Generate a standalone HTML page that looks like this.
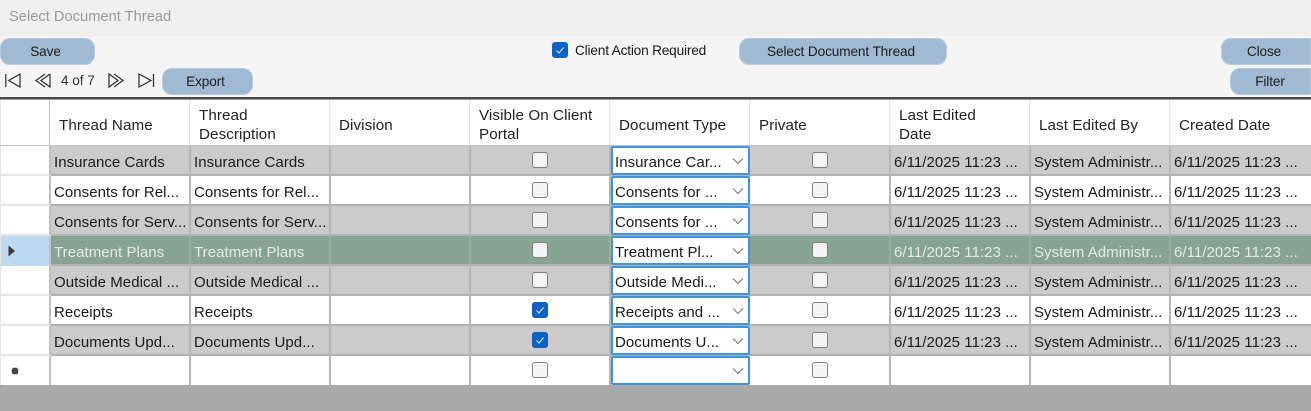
<!DOCTYPE html>
<html><head><meta charset="utf-8"><title>Select Document Thread</title>
<style>
html,body{margin:0;padding:0;width:1311px;height:411px;overflow:hidden;background:#f5f5f5;font-family:"Liberation Sans",sans-serif;font-size:14px;color:#1a1a1a}
div,span,i{box-sizing:border-box}
.a{position:absolute}
#top{left:0;top:0;width:1311px;height:36px;background:#f0f0f0}
#title{left:9px;top:8px;font-size:14.7px;color:#9a9a9a;line-height:18px;white-space:nowrap}
.b{position:absolute;background:#9fbad2;border:1px solid #b6cbdd;border-radius:10px;text-align:center;height:27px;line-height:25px;font-size:13.6px;color:#1c1c1c;letter-spacing:-.1px;padding-right:4px}
.h{position:absolute;top:100px;height:46px;background:#fff;border-right:2px solid #e0e0e0;border-bottom:1px solid #c4c4c4;font-size:15.2px;line-height:19px;color:#222;white-space:nowrap;letter-spacing:.08px}
.h span{position:absolute;left:9px;top:16px}
.h span.t{top:6px}
.r{position:absolute;left:0;width:1311px;height:30px;background:#fff;border-bottom:2px solid #b2b2b2}
.g{background:#cbcbcb}
.s{background:#87a392;color:#e6eee9}
.r>span{position:absolute;top:0;height:28px;line-height:33px;border-right:2px solid #b6b6b6;white-space:nowrap;padding-left:4px;font-size:15px;letter-spacing:.05px}
.s>span{border-right-color:#9aad9f}
.r>span.n{left:0;width:51px;height:30px;background:#fff;border-right:2px solid #c0c0c0;border-left:1px solid #e4e4e4;border-bottom:2px solid #e6e6e6}
.c1{left:50px;width:141px}.c2{left:190px;width:141px}.c3{left:330px;width:141px}.c4{left:470px;width:141px}
.c6{left:750px;width:141px}.c7{left:890px;width:141px}.c8{left:1030px;width:141px}.c9{left:1170px;width:141px;border-right:0!important}
.d{position:absolute;left:611px;top:0;width:139px;height:29px;background:#fff;border:2px solid #3f94de;border-radius:2px;line-height:30px;padding-left:2px;font-size:15px;letter-spacing:.05px;color:#1a1a1a;white-space:nowrap;z-index:2}
.d svg{position:absolute;left:119px;top:9px}
.cb{position:absolute;width:16px;height:16px;border:1.5px solid #808080;border-radius:3px;background:#f3f3f3;top:6px;z-index:2}
.on{background:#0b62c4;border-color:#0b62c4}
.on svg{position:absolute;left:2px;top:3px}
</style></head><body>
<div class="a" id="top"></div>
<div class="a" id="title">Select Document Thread</div>

<div class="b" style="left:0;top:38px;width:95px">Save</div>
<div class="cb on" style="left:552px;top:42px"><svg width="10" height="9" viewBox="0 0 10 9"><path d="M1.5 4.5 4 7 8.5 1.5" fill="none" stroke="#cfe2f7" stroke-width="1.2"/></svg></div>
<div class="a" style="left:575px;top:42px;font-size:13.7px;line-height:18px;letter-spacing:-.2px;white-space:nowrap">Client Action Required</div>
<div class="b" style="left:739px;top:38px;width:208px">Select Document Thread</div>
<div class="b" style="left:1221px;top:38px;width:90px;border-radius:10px 0 0 10px">Close</div>
<div class="b" style="left:162px;top:68px;width:91px">Export</div>
<div class="b" style="left:1230px;top:68px;width:81px;border-radius:10px 0 0 10px;padding-right:1px">Filter</div>

<svg class="a" style="left:0;top:68px" width="160" height="26" viewBox="0 0 160 26" fill="none" stroke="#333" stroke-width="1.25">
<path d="M5.8 6V19M20 6 8.8 12.5 20 19Z"/>
<path d="M45 6 36 12.5 45 19M50 6 41 12.5 50 19V6"/>
<path d="M109 6V19L118 12.5ZM114 6 123 12.5 114 19"/>
<path d="M139 6V19L151 12.5ZM153.5 6V19"/>
</svg>
<div class="a" style="left:61px;top:72px;font-size:13.6px;line-height:18px;letter-spacing:-.05px;color:#333;white-space:nowrap">4 of 7</div>

<div class="a" style="left:0;top:97px;width:1311px;height:3px;background:#4a4a4a;border-bottom:1px solid #999"></div>
<div class="a" style="left:0;top:385px;width:1311px;height:26px;background:#a9a9a9"></div>

<div class="h" style="left:0;width:51px;border-right-color:#c0c0c0;border-left:1px solid #e4e4e4"></div>
<div class="h" style="left:50px;width:141px"><span>Thread Name</span></div>
<div class="h" style="left:190px;width:141px"><span class="t">Thread<br>Description</span></div>
<div class="h" style="left:330px;width:141px"><span>Division</span></div>
<div class="h" style="left:470px;width:141px"><span class="t">Visible On Client<br>Portal</span></div>
<div class="h" style="left:610px;width:141px"><span>Document Type</span></div>
<div class="h" style="left:750px;width:141px"><span>Private</span></div>
<div class="h" style="left:890px;width:141px"><span class="t">Last Edited<br>Date</span></div>
<div class="h" style="left:1030px;width:141px"><span>Last Edited By</span></div>
<div class="h" style="left:1170px;width:141px;border-right:0"><span>Created Date</span></div>

<div class="r g" style="top:146px"><span class="n"></span><span class="c1">Insurance Cards</span><span class="c2">Insurance Cards</span><span class="c3"></span><span class="c4"></span><i class="cb" style="left:532px"></i><div class="d">Insurance Car...<svg width="12" height="8" viewBox="0 0 12 8"><path d="M1 1.5 6 6.5 11 1.5" fill="none" stroke="#777" stroke-width="1.1"/></svg></div><span class="c6"></span><i class="cb" style="left:812px"></i><span class="c7">6/11/2025 11:23 ...</span><span class="c8">System Administr...</span><span class="c9">6/11/2025 11:23 ...</span></div>

<div class="r" style="top:176px"><span class="n"></span><span class="c1">Consents for Rel...</span><span class="c2">Consents for Rel...</span><span class="c3"></span><span class="c4"></span><i class="cb" style="left:532px"></i><div class="d">Consents for ...<svg width="12" height="8" viewBox="0 0 12 8"><path d="M1 1.5 6 6.5 11 1.5" fill="none" stroke="#777" stroke-width="1.1"/></svg></div><span class="c6"></span><i class="cb" style="left:812px"></i><span class="c7">6/11/2025 11:23 ...</span><span class="c8">System Administr...</span><span class="c9">6/11/2025 11:23 ...</span></div>

<div class="r g" style="top:206px"><span class="n"></span><span class="c1">Consents for Serv...</span><span class="c2">Consents for Serv...</span><span class="c3"></span><span class="c4"></span><i class="cb" style="left:532px"></i><div class="d">Consents for ...<svg width="12" height="8" viewBox="0 0 12 8"><path d="M1 1.5 6 6.5 11 1.5" fill="none" stroke="#777" stroke-width="1.1"/></svg></div><span class="c6"></span><i class="cb" style="left:812px"></i><span class="c7">6/11/2025 11:23 ...</span><span class="c8">System Administr...</span><span class="c9">6/11/2025 11:23 ...</span></div>

<div class="r s" style="top:236px"><span class="n" style="background:#bbdaf2;border-bottom-color:#bbdaf2"><svg style="position:absolute;left:7px;top:9px" width="8" height="12" viewBox="0 0 8 12"><path d="M0.5 0.5 7 6 0.5 11.5Z" fill="#3c3c3c"/></svg></span><span class="c1">Treatment Plans</span><span class="c2">Treatment Plans</span><span class="c3"></span><span class="c4"></span><i class="cb" style="left:532px"></i><div class="d">Treatment Pl...<svg width="12" height="8" viewBox="0 0 12 8"><path d="M1 1.5 6 6.5 11 1.5" fill="none" stroke="#777" stroke-width="1.1"/></svg></div><span class="c6"></span><i class="cb" style="left:812px"></i><span class="c7">6/11/2025 11:23 ...</span><span class="c8">System Administr...</span><span class="c9">6/11/2025 11:23 ...</span></div>

<div class="r g" style="top:266px"><span class="n"></span><span class="c1">Outside Medical ...</span><span class="c2">Outside Medical ...</span><span class="c3"></span><span class="c4"></span><i class="cb" style="left:532px"></i><div class="d">Outside Medi...<svg width="12" height="8" viewBox="0 0 12 8"><path d="M1 1.5 6 6.5 11 1.5" fill="none" stroke="#777" stroke-width="1.1"/></svg></div><span class="c6"></span><i class="cb" style="left:812px"></i><span class="c7">6/11/2025 11:23 ...</span><span class="c8">System Administr...</span><span class="c9">6/11/2025 11:23 ...</span></div>

<div class="r" style="top:296px"><span class="n"></span><span class="c1">Receipts</span><span class="c2">Receipts</span><span class="c3"></span><span class="c4"></span><i class="cb on" style="left:532px"><svg width="10" height="9" viewBox="0 0 10 9"><path d="M1.5 4.5 4 7 8.5 1.5" fill="none" stroke="#cfe2f7" stroke-width="1.2"/></svg></i><div class="d">Receipts and ...<svg width="12" height="8" viewBox="0 0 12 8"><path d="M1 1.5 6 6.5 11 1.5" fill="none" stroke="#777" stroke-width="1.1"/></svg></div><span class="c6"></span><i class="cb" style="left:812px"></i><span class="c7">6/11/2025 11:23 ...</span><span class="c8">System Administr...</span><span class="c9">6/11/2025 11:23 ...</span></div>

<div class="r g" style="top:326px"><span class="n"></span><span class="c1">Documents Upd...</span><span class="c2">Documents Upd...</span><span class="c3"></span><span class="c4"></span><i class="cb on" style="left:532px"><svg width="10" height="9" viewBox="0 0 10 9"><path d="M1.5 4.5 4 7 8.5 1.5" fill="none" stroke="#cfe2f7" stroke-width="1.2"/></svg></i><div class="d">Documents U...<svg width="12" height="8" viewBox="0 0 12 8"><path d="M1 1.5 6 6.5 11 1.5" fill="none" stroke="#777" stroke-width="1.1"/></svg></div><span class="c6"></span><i class="cb" style="left:812px"></i><span class="c7">6/11/2025 11:23 ...</span><span class="c8">System Administr...</span><span class="c9">6/11/2025 11:23 ...</span></div>

<div class="r" style="top:356px;height:29px;border-bottom:0"><span class="n" style="height:29px;border-bottom:0"><svg style="position:absolute;left:10px;top:11px" width="8" height="8" viewBox="0 0 8 8"><path d="M2 .8H6L7.2 2.5V6L6 7.2H2L.8 6V2.5Z" fill="#444"/></svg></span><span class="c1" style="height:29px"></span><span class="c2" style="height:29px"></span><span class="c3" style="height:29px"></span><span class="c4" style="height:29px"></span><i class="cb" style="left:532px"></i><div class="d" style="height:29px"><svg width="12" height="8" viewBox="0 0 12 8"><path d="M1 1.5 6 6.5 11 1.5" fill="none" stroke="#777" stroke-width="1.1"/></svg></div><span class="c6" style="height:29px"></span><i class="cb" style="left:812px"></i><span class="c7" style="height:29px"></span><span class="c8" style="height:29px"></span><span class="c9" style="height:29px"></span></div>
</body></html>
